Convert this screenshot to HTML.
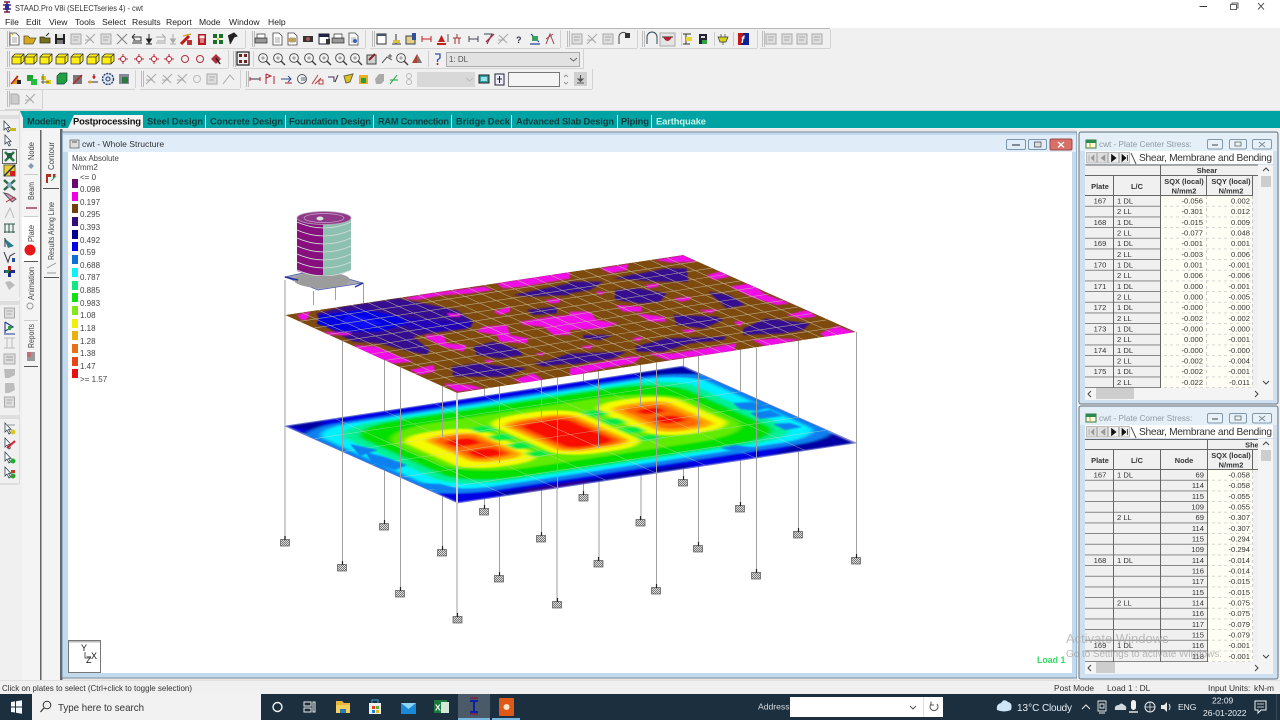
<!DOCTYPE html>
<html lang="en"><head><meta charset="utf-8"><title>STAAD.Pro V8i</title>
<style>
html,body{margin:0;padding:0;width:1280px;height:720px;overflow:hidden;background:#f0f0f0}
svg{display:block;position:absolute;left:0;top:0;filter:blur(.3px)}
text{font-family:"Liberation Sans",sans-serif;font-size:8.5px;fill:#333}
.m{font-size:8.6px;fill:#222}
.tb{font-weight:bold;font-size:9.4px;fill:#123c3c}
.t{font-size:7.6px;fill:#333}
.e{text-anchor:end}
.c{text-anchor:middle}
.h{font-size:7.4px;font-weight:bold;fill:#333;text-anchor:middle}
.l{font-size:8px;fill:#444}
.v{font-size:8.6px;fill:#444}
.w{fill:#e8eef2;font-size:9.5px}
</style></head><body>
<svg width="1280" height="720" viewBox="0 0 1280 720" xmlns="http://www.w3.org/2000/svg">
<defs>
<pattern id="rl" width="60" height="10.667" patternUnits="userSpaceOnUse" y="196"><rect width="60" height="1" y="9.9" fill="#666"/></pattern>
<pattern id="rd" width="6" height="10.667" patternUnits="userSpaceOnUse" y="196"><rect width="3" height="1" y="9.9" fill="#ccc"/></pattern>
<pattern id="rl2" width="60" height="10.667" patternUnits="userSpaceOnUse" y="470"><rect width="60" height="1" y="9.9" fill="#666"/></pattern>
<pattern id="rd2" width="6" height="10.667" patternUnits="userSpaceOnUse" y="470"><rect width="3" height="1" y="9.9" fill="#ccc"/></pattern>
<pattern id="hatch" width="2" height="2" patternUnits="userSpaceOnUse"><rect width="2" height="2" fill="#ddd"/><rect width="1" height="1" fill="#777"/><rect x="1" y="1" width="1" height="1" fill="#777"/></pattern>
<clipPath id="pl"><rect width="100" height="100"/></clipPath>
<clipPath id="top"><polygon points="285,315 683,255 856,332 457,393"/></clipPath>
<clipPath id="cyl"><rect x="297" y="214" width="54" height="62"/></clipPath>
<filter id="b" x="-5%" y="-5%" width="110%" height="110%"><feGaussianBlur stdDeviation=".55 .7"/></filter>
<filter id="b2" x="-5%" y="-5%" width="110%" height="110%"><feGaussianBlur stdDeviation=".6 .9"/></filter>
<g id="cube"><path d="M-6 -2 L-3 -5 H6 V2 L3 5 H-6Z" fill="#ffee10" stroke="#333" stroke-width=".8"/><path d="M-6 -2 H3 V5 M3 -2 L6 -5" fill="none" stroke="#333" stroke-width=".8"/></g>
<g id="ra"><path d="M-5 0H5M0 -5V5" stroke="#c02030" stroke-width="1"/><circle r="2.5" fill="#fff" stroke="#c02030"/></g>
<g id="mag"><circle cx="-1" cy="-1" r="4.4" fill="#f4f4f4" stroke="#555"/><path d="M2 2L6 6" stroke="#444" stroke-width="1.5"/><path d="M-3 -1H1M-1 -3V1" stroke="#777" stroke-width=".7"/></g>
<g id="dis"><path d="M-5 -5H5V5H-5Z" fill="#ddd" stroke="#aaa"/><path d="M-3 -2H3M-3 1H2" stroke="#aaa"/></g>
<g id="dis2"><path d="M-5 5L5 -5M-4 -4L4 4M-5 1H2" fill="none" stroke="#aaa" stroke-width="1.1"/></g>
<g id="pg"><path d="M-4 -6H2L5 -3V6H-4Z" fill="#fff" stroke="#444" stroke-width=".8"/><path d="M-2 -1H3M-2 1H3M-2 3H3" stroke="#888" stroke-width=".7"/></g>
<g id="pr"><path d="M-6 -1H6V4H-6Z" fill="#999" stroke="#333" stroke-width=".7"/><path d="M-4 -5H4V-1H-4Z" fill="#fff" stroke="#333" stroke-width=".7"/></g>
<g id="lft"><path d="M-4 -6L-4 3L-2 1L0 5L1.5 4L-.5 0.5L2 .5Z" fill="#fff" stroke="#345" stroke-width=".8"/></g>
</defs>

<!-- chrome -->
<rect width="1280" height="720" fill="#f0f0f0"/>
<rect width="1280" height="28" fill="#fff"/>
<path d="M4 2H10M7 2V12M4 12H10M3 5H11M3 9H11" stroke="#702050" stroke-width="1.6"/>
<path d="M5 4H9V10H5Z" fill="#2030a0"/>
<text x="15" y="11" style="font-size:8.2px" textLength="128" lengthAdjust="spacingAndGlyphs">STAAD.Pro V8i (SELECTseries 4) - cwt</text>
<text class="m" x="5" y="25">File</text><text class="m" x="26" y="25">Edit</text><text class="m" x="49" y="25">View</text><text class="m" x="75" y="25">Tools</text><text class="m" x="102" y="25">Select</text><text class="m" x="132" y="25">Results</text><text class="m" x="166" y="25">Report</text><text class="m" x="199" y="25">Mode</text><text class="m" x="229" y="25">Window</text><text class="m" x="268" y="25">Help</text>
<path d="M1199.500 6.500H1207" stroke="#333"/>
<path d="M1230.500 4.500H1236.500V9.500H1230.500ZM1232 4V3H1238V8H1237" fill="none" stroke="#333" stroke-width=".8"/>
<path d="M1258 3L1264 9.500M1264 3L1258 9.500" stroke="#333" stroke-width=".9"/>

<!-- toolbars -->
<rect y="28" width="830" height="1" fill="#b8b8b8"/>
<g fill="none" stroke="#d2d2d2">
<path d="M5 48.500H245M250 48.500H365M370 48.500H560M565 48.500H637M640 48.500H757M760 48.500H830"/>
<path d="M5 68.500H228M233 68.500H583M583.500 49V69"/>
<path d="M5 89.500H135M140 89.500H240M245 89.500H592M592.500 69V89"/>
<path d="M5 109.500H42M42.500 90V109"/>
<path d="M245.500 30V48M365.500 30V48M560.500 30V48M637.500 30V48M757.500 30V48M830.500 30V48M228.500 50V68M135.500 70V88M240.500 70V88M253.500 51V67"/>
</g>
<g fill="none" stroke="#bcbcbc">
<path d="M7.500 31V47M9.500 31V47M252.500 31V47M254.500 31V47M372.500 31V47M374.500 31V47M567.500 31V47M569.500 31V47M642.500 31V47M644.500 31V47M762.500 31V47M764.500 31V47"/>
<path d="M7.500 51V67M9.500 51V67M233.500 51V67M235.500 51V67M7.500 71V87M9.500 71V87M141.500 71V87M143.500 71V87M246.500 71V87M248.500 71V87M7.500 91V107M9.500 91V107"/>
</g>
<!-- row 1 -->
<use href="#pg" x="14" y="39"/><path d="M11 33L13 35M9 36H11" stroke="#c90"/>
<path d="M24 43V36H28L30 38H34L36 38L33 44H24Z" fill="#d8a820" stroke="#553" stroke-width=".8"/>
<path d="M40 43V37H44L45 38H50V43Z" fill="#76701c" stroke="#332" stroke-width=".8"/><path d="M46 36L49 33" stroke="#222"/>
<path d="M55 34H65V44H55Z" fill="#222"/><path d="M57 34H63V38H57Z" fill="#ddd"/><path d="M57 40H63V44H57Z" fill="#777"/>
<use href="#dis" x="76" y="39"/><use href="#dis2" x="90" y="39"/><use href="#dis" x="106" y="39"/><path d="M117 34L127 44M127 34L117 44" stroke="#888" stroke-width="1.2"/>
<path d="M132 37H141V41H133M132 37L135 34M132 37L135 40M132 43H142" fill="none" stroke="#333" stroke-width="1"/>
<path d="M149 34V41M146.500 39L149 43L151.500 39ZM146 44H152" fill="#222" stroke="#222"/>
<path d="M156 37H165V41H157M165 37L162 34M156 43H166" fill="none" stroke="#aaa"/>
<path d="M173 34V41M170.500 39L173 43L175.500 39ZM170 44H176" fill="#aaa" stroke="#aaa"/>
<path d="M181 44L189 36" stroke="#c01818" stroke-width="3"/><path d="M183 36L191 34" stroke="#d0a020" stroke-width="1.4"/><path d="M187 40H192V45H187Z" fill="#c03030"/>
<path d="M198 34H206V45H198Z" fill="#b81820"/><path d="M200 36H204V38H200ZM200 40H204M200 42H204" fill="#eee" stroke="#eee"/>
<path d="M213 34H217V38H213ZM219 34H223V38H219ZM213 40H217V44H213ZM219 40H223V44H219Z" fill="#187028"/><path d="M217 38H219V40H217Z" fill="#d0e010"/>
<path d="M228 36L234 33L237 36L234 37L230 44" fill="#222" stroke="#222"/>
<use href="#pr" x="261" y="39"/><use href="#pg" x="277" y="39"/><use href="#pg" x="292" y="39"/><path d="M288 42H296V38H288Z" fill="#bba060"/>
<path d="M303 36H313V42H303Z" fill="#333"/><circle cx="308" cy="39" r="2" fill="#a55"/>
<path d="M319 34H329V44H319Z" fill="#fff" stroke="#223"/><path d="M319 34H329V37H319Z" fill="#224"/><path d="M326 39H330V44H326Z" fill="#333"/>
<use href="#pr" x="338" y="39"/><use href="#pg" x="353" y="39"/><circle cx="355" cy="41" r="2" fill="#3060c0"/>
<path d="M377 34H386V44H377Z" fill="#fff" stroke="#333"/><path d="M377 34H386V36H377Z" fill="#456"/>
<path d="M392 44H401M396 44V34" stroke="#333"/><path d="M393 40H400V43H393Z" fill="#d8c040"/>
<path d="M406 36H415V44H406Z" fill="#e8d080" stroke="#345"/><path d="M412 33H416V40H412Z" fill="#3050a0"/>
<path d="M422 39H431M422 36V42M431 36V42" stroke="#c02020"/>
<path d="M437 44H446" stroke="#c02020" stroke-width="2"/><path d="M441.500 35L438 42H445Z" fill="#c02020"/><path d="M448 34V42" stroke="#555"/>
<path d="M453 38H461M455 38V44M459 38V44M457 38V34" fill="none" stroke="#a03030"/>
<path d="M469 39H478M469 36V42M478 36V42" stroke="#445"/>
<path d="M484 34H492L487 44" fill="none" stroke="#345"/><path d="M486 42L494 34" stroke="#c02040" stroke-width="1.3"/>
<use href="#dis2" x="503" y="39"/><text x="516" y="43" style="font-size:9px;font-weight:bold;fill:#334">?</text>
<path d="M530 44H540M531 34L539 42" stroke="#2040a0" stroke-width="1.2"/><path d="M532 36H538V41H532Z" fill="#40a060"/>
<path d="M546 44L550 34L554 44M553 34L546 39" fill="none" stroke="#a04050"/>
<use href="#dis" x="577" y="39"/><use href="#dis2" x="592" y="39"/><use href="#dis" x="608" y="39"/>
<path d="M619 44V38M619 38A4 4 0 0 1 628 36" fill="none" stroke="#444"/><path d="M625 33H630V38H625Z" fill="#333"/>
<path d="M647 44V37A5 5 0 0 1 657 37V44" fill="none" stroke="#345"/>
<rect x="660" y="33" width="15" height="13" fill="#e4e4e4" stroke="#aaa"/><path d="M662 37H673" stroke="#333"/><path d="M663 37Q667.500 45 672 37Z" fill="#b02030"/>
<rect x="681" y="32" width="1" height="14" fill="#ccc"/><path d="M683 34H691M686 34V44M683 44H690" stroke="#333"/><path d="M686 37H692V41H686Z" fill="#e8d830"/>
<path d="M699 34H707V44H699Z" fill="#223"/><path d="M701 36H705V38H701Z" fill="#ddd"/><path d="M702 40H707V44H702Z" fill="#30a040"/>
<rect x="714" y="32" width="1" height="14" fill="#ccc"/><path d="M718 37H728L726 42H720ZM721 34V37M725 34V37M723 42V45" fill="#d8d020" stroke="#333" stroke-width=".7"/>
<rect x="733" y="32" width="1" height="14" fill="#ccc"/><rect x="738" y="33" width="11" height="12" fill="#c01818"/><path d="M743 33H749V45H741Z" fill="#102090"/><text x="741" y="43" style="font-size:10px;font-weight:bold;font-style:italic;fill:#fff">f</text>
<use href="#dis" x="771" y="39"/><use href="#dis" x="787" y="39"/><use href="#dis" x="802" y="39"/><use href="#dis" x="817" y="39"/>
<!-- row 2 -->
<use href="#cube" x="18" y="59"/><use href="#cube" x="31" y="59"/><use href="#cube" x="46" y="59"/><use href="#cube" x="62" y="59"/><use href="#cube" x="77" y="59"/><use href="#cube" x="93" y="59"/><use href="#cube" x="108" y="59"/>
<use href="#ra" x="123" y="59"/><use href="#ra" x="139" y="59"/><use href="#ra" x="154" y="59"/><use href="#ra" x="169" y="59"/>
<circle cx="185" cy="59" r="3.500" fill="none" stroke="#b03040"/><circle cx="200" cy="59" r="3.500" fill="none" stroke="#b03040"/>
<path d="M211 59L216 54L221 59L216 64Z" fill="#b03040"/><path d="M216 58L220 64" stroke="#222" stroke-width="1.500"/>
<rect x="237" y="52" width="12" height="13" fill="#eee" stroke="#222" stroke-width="1.200"/><path d="M239 54H242V57H239ZM244 54H247V57H244ZM239 60H242V63H239ZM244 60H247V63H244Z" fill="#702020"/>
<use href="#mag" x="264" y="59"/><use href="#mag" x="279" y="59"/><use href="#mag" x="295" y="59"/><use href="#mag" x="310" y="59"/><use href="#mag" x="325" y="59"/><use href="#mag" x="341" y="59"/><use href="#mag" x="356" y="59"/>
<path d="M367 55H376V64H367Z" fill="#d0d0d0" stroke="#444"/><path d="M369 60L375 54" stroke="#8a2020" stroke-width="2"/>
<path d="M382 63L387 57L392 60M390 54V59M388 56H392" fill="none" stroke="#555"/>
<use href="#mag" x="402" y="59"/>
<path d="M412 63L417 54L422 63Z" fill="#b04030"/><path d="M417 54V63H422Z" fill="#777"/>
<rect x="428" y="51" width="1" height="16" fill="#ccc"/>
<path d="M435 54H440V58L437.500 60V62" fill="none" stroke="#3050a0" stroke-width="1.300"/><circle cx="437.500" cy="64" r="1" fill="#a02020"/>
<rect x="446.500" y="52.500" width="133" height="14" fill="#e2e2e2" stroke="#aaa"/><text x="449" y="62" style="font-size:8px;fill:#555">1: DL</text><path d="M570 58L573.500 61L577 58" fill="none" stroke="#666"/>
<!-- row 3 -->
<path d="M11 84L17 75L20 84Z" fill="#d8a020"/><path d="M11 84L18 76" stroke="#c02020" stroke-width="1.500"/><path d="M17 80H21V84H17Z" fill="#223"/>
<path d="M27 75H33V81H27Z" fill="#20a030"/><path d="M31 79H37V85H31Z" fill="#20c040"/>
<path d="M41 76H46V80H41ZM46 80H51V84H46Z" fill="#e0d010"/><path d="M43 74V84M41 82H49" stroke="#333" stroke-width=".7"/>
<path d="M57 76L60 73H67V81L64 84H57Z" fill="#20a040" stroke="#143" stroke-width=".7"/>
<path d="M73 75H82V84H73Z" fill="#777"/><path d="M73 84L82 75" stroke="#c02020" stroke-width="1.500"/>
<path d="M88 82H98M94 74V79" stroke="#333" stroke-width="1"/><circle cx="90" cy="82" r="1.500" fill="#e0a020"/><circle cx="94" cy="77" r="1.500" fill="#d02020"/>
<circle cx="108" cy="79" r="5.500" fill="#dfe6f0" stroke="#223a6a" stroke-width="1.400" stroke-dasharray="2 1"/><circle cx="108" cy="79" r="2" fill="none" stroke="#223a6a"/>
<path d="M119 74H129V84H119Z" fill="#889"/><path d="M122 77H128V83H122Z" fill="#2a7a40"/>
<use href="#dis2" x="151" y="79"/><use href="#dis2" x="167" y="79"/><use href="#dis2" x="182" y="79"/><circle cx="197" cy="79" r="3.500" fill="none" stroke="#bbb"/><use href="#dis" x="212" y="79"/><path d="M223 84L230 75L234 80" fill="none" stroke="#aaa"/>
<path d="M250 79H260" stroke="#334"/><path d="M250 77V81M260 77V81" stroke="#c02020"/>
<path d="M266 74V84M266 74L271 76L266 78M274 76V84" fill="none" stroke="#b02030"/>
<path d="M281 79H291M288 76L291 79L288 82" fill="none" stroke="#304a90"/><path d="M285 83H292" stroke="#a02020"/>
<circle cx="302" cy="79" r="4.500" fill="none" stroke="#556"/><path d="M301 77H306V81H301Z" fill="#a0b0b0"/>
<path d="M312 84L318 75M315 84L321 78M319 80H323V84H319Z" fill="none" stroke="#b04040"/>
<path d="M328 77H334V82M335 82L338 75" fill="none" stroke="#435"/>
<path d="M344 76L353 74L350 82L346 83Z" fill="#e0c020" stroke="#664"/>
<path d="M359 75H368V84H359Z" fill="#e8b020"/><path d="M361 78H366V83H361Z" fill="#20a040"/>
<path d="M375 79L379 74H384V81L381 84H376Z" fill="#aaa"/>
<path d="M390 84L397 75M390 80H398" stroke="#20a040" fill="none"/>
<circle cx="409" cy="76" r="2.500" fill="none" stroke="#bbb"/><circle cx="409" cy="82" r="2.500" fill="none" stroke="#bbb"/>
<rect x="417" y="72" width="58" height="15" fill="#d8d8d8"/><path d="M466 78L469.500 81L473 78" fill="none" stroke="#bbb"/>
<rect x="479" y="75" width="10" height="8" fill="#30a0a8" stroke="#222"/><rect x="481" y="77" width="6" height="4" fill="#a0e0e8"/>
<rect x="495" y="74" width="9" height="11" fill="#eef" stroke="#223"/><path d="M499.500 76V83M497 79H502" stroke="#223"/>
<rect x="508.500" y="72.500" width="51" height="14" fill="#f4f4f4" stroke="#777"/>
<path d="M564 77L566 75L568 77M564 82L566 84L568 82" fill="none" stroke="#999"/>
<rect x="574" y="72" width="13" height="14" fill="#cfcfcf"/><path d="M580.500 75V81M578 79L580.500 81.500L583 79ZM577 83H584" stroke="#555" fill="#555"/>
<!-- row 4 -->
<path d="M11 94H17L19 96V104H11Z" fill="#ccc" stroke="#aaa"/><use href="#dis2" x="30" y="99"/>

<!-- teal -->
<rect y="110" width="1280" height="1" fill="#d8d8d8"/>
<path d="M20 111H1280V128H20Z" fill="#00a3a3"/>
<path d="M20 111V128H23V118Z" fill="#f0f0f0"/>
<path d="M68 128L74 115H143V128Z" fill="#f3f3f3"/>
<path d="M205.500 115V128M285.500 115V128M373.500 115V128M451.500 115V128M511.500 115V128M617.500 115V128M651.500 115V128" stroke="#d8f0f0"/>
<text class="tb" x="27" y="124.500" style="font-size:9.300px" textLength="39">Modeling</text>
<text class="tb" x="73" y="124.500" style="fill:#111" textLength="68">Postprocessing</text>
<text class="tb" x="147" y="124.500" textLength="56">Steel Design</text>
<text class="tb" x="210" y="124.500" textLength="73">Concrete Design</text>
<text class="tb" x="289" y="124.500" textLength="82">Foundation Design</text>
<text class="tb" x="378" y="124.500" textLength="71">RAM Connection</text>
<text class="tb" x="456" y="124.500" textLength="54">Bridge Deck</text>
<text class="tb" x="516" y="124.500" textLength="98">Advanced Slab Design</text>
<text class="tb" x="621" y="124.500" textLength="28">Piping</text>
<text class="tb" x="656" y="124.500" style="fill:#c8f4e8" textLength="50">Earthquake</text>

<!-- left toolbar -->
<path d="M0 116H19M0 118H19" stroke="#ccc"/><rect x="19" y="112" width="1" height="185" fill="#ddd"/>
<use href="#lft" x="8" y="127"/><path d="M10 128H16V131H10Z" fill="#c8b820"/>
<use href="#lft" x="9" y="141"/>
<rect x="2.500" y="149.500" width="14" height="14" fill="#eef" stroke="#666"/><path d="M5 152L14 161M14 152L5 161" stroke="#20803a" stroke-width="2.500"/><path d="M7 153H12V158H7Z" fill="#2a5a3a"/>
<path d="M4 165H15V176H4Z" fill="#e8d030" stroke="#664"/><path d="M4 176L15 165" stroke="#203040" stroke-width="1.500"/><path d="M10 171H15V176H10Z" fill="#d02020"/>
<path d="M4 180L15 190M15 180L4 190" stroke="#2a6a4a" stroke-width="2.500"/><circle cx="9.500" cy="185" r="2.500" fill="#8ac"/>
<path d="M4 193L12 202L16 199L8 194Z" fill="#d0a0c0" stroke="#555"/><path d="M6 202L15 197" stroke="#c02030"/>
<path d="M5 218L10 208L14 218" fill="none" stroke="#bbb"/>
<path d="M4 224H15M5 224V233M9 224V233M13 224V233M4 232H15" stroke="#2a5a4a"/>
<path d="M4 238L14 246L8 248Z" fill="#2a7a90"/><path d="M5 238V247" stroke="#333"/>
<path d="M4 252L8 262L10 256L15 253" fill="none" stroke="#334"/><path d="M12 258H15V262H12Z" fill="#2050a0"/>
<path d="M9.500 266V277M4 271.500H15" stroke="#1a2a90" stroke-width="3"/><path d="M9.500 266V271" stroke="#c02020" stroke-width="3"/><path d="M5 271.500H9" stroke="#208030" stroke-width="3"/>
<path d="M5 282L9 290L15 285L10 281Z" fill="#bbb"/>
<path d="M0 302H19M0 304H19" stroke="#ccc"/><rect x="19" y="300" width="1" height="112" fill="#ddd"/>
<use href="#dis" x="9.500" y="313"/>
<path d="M5 322V333M5 322L13 327L5 331M4 334H15" fill="none" stroke="#223a90" stroke-width="1.100"/><path d="M8 326H11V330H8Z" fill="#30a040"/>
<path d="M4 338H15M4 348H15M7 338V348M12 338V348" stroke="#bbb"/>
<path d="M4 354H15V364H4Z" fill="#ddd" stroke="#aaa"/><path d="M6 357H13M6 360H13" stroke="#999"/>
<path d="M4 369H15V375L9 378H5Z" fill="#bbb"/><path d="M5 383H14L15 390L9 393H5Z" fill="#bdbdbd"/><use href="#dis" x="9.500" y="402"/>
<path d="M0 416H19M0 418H19" stroke="#ccc"/><rect x="19" y="414" width="1" height="70" fill="#ddd"/>
<use href="#lft" x="9" y="429"/><circle cx="13" cy="432" r="2.500" fill="#d8c820"/><path d="M6 425H15" stroke="#999"/>
<use href="#lft" x="9" y="444"/><path d="M7 448L15 441" stroke="#d02030" stroke-width="2"/>
<use href="#lft" x="9" y="458"/><circle cx="13" cy="461" r="2.500" fill="#20b030"/>
<use href="#lft" x="9" y="473"/><circle cx="13" cy="476" r="2.500" fill="#30a030"/><path d="M11 470H15V473H11Z" fill="#c04020"/>
<path d="M0 484H19" stroke="#ccc"/>

<!-- vertical tab strips -->
<rect x="22" y="131" width="18" height="549" fill="#f4f4f4"/>
<rect x="42" y="129" width="18" height="551" fill="#f4f4f4"/>
<rect x="40" y="130" width="1.500" height="550" fill="#666"/>
<path d="M24 174.500H38M24 216.500H38M24 320.500H38" stroke="#ccc"/>
<rect x="22" y="217" width="18" height="44" fill="#fff"/>
<path d="M24 366.500H38M24 261.500H38" stroke="#555"/><path d="M43 188.500H59M44 277.500H59" stroke="#555"/>
<text class="v" transform="translate(34,160) rotate(-90)" textLength="18" lengthAdjust="spacingAndGlyphs">Node</text>
<path d="M31 163L34 166L31 169L28 166Z" fill="#8898b8"/>
<text class="v" transform="translate(34,200) rotate(-90)" textLength="18" lengthAdjust="spacingAndGlyphs">Beam</text><path d="M26 208H37" stroke="#a04060" stroke-width="1.500"/>
<text class="v" transform="translate(34,242) rotate(-90)" textLength="17" lengthAdjust="spacingAndGlyphs">Plate</text><circle cx="30" cy="250" r="5.500" fill="#e81818"/>
<text class="v" transform="translate(34,300) rotate(-90)" textLength="33" lengthAdjust="spacingAndGlyphs">Animation</text><circle cx="30" cy="306" r="3" fill="none" stroke="#999"/>
<text class="v" transform="translate(34,348) rotate(-90)" textLength="24" lengthAdjust="spacingAndGlyphs">Reports</text><rect x="27" y="352" width="8" height="9" fill="#999"/><path d="M27 352H31V357H27Z" fill="#c07070"/>
<text class="v" transform="translate(54,170) rotate(-90)" textLength="28" lengthAdjust="spacingAndGlyphs">Contour</text>
<path d="M46 174H51V177H48V183H46ZM53 174H56L53 180Z" fill="#b03020"/><path d="M51 181L56 176" stroke="#30b060"/>
<text class="v" transform="translate(54,260) rotate(-90)" textLength="58" lengthAdjust="spacingAndGlyphs">Results Along Line</text>
<path d="M47 268L56 263M47 273H56" fill="none" stroke="#999"/>

<!-- MDI -->
<rect x="60" y="129" width="1020" height="551" fill="#e8e8e8"/>
<rect x="60" y="129" width="2.500" height="551" fill="#5c6770"/>
<rect x="62" y="132" width="1015" height="546" fill="#c2daee" stroke="#66788a" stroke-width=".8"/>
<rect x="63" y="135" width="1013" height="17" fill="#e0edf8"/>
<rect x="68" y="152" width="1004" height="521" fill="#fff"/>
<rect x="70" y="140" width="9" height="8" fill="#ddd" stroke="#555" stroke-width=".7"/><path d="M72 142H77" stroke="#555"/>
<text x="82" y="147" style="font-size:8.6px;fill:#333">cwt - Whole Structure</text>
<g fill="none" stroke="#7d95a8"><rect x="1006.500" y="139.500" width="19" height="10" rx="1.500"/><rect x="1028.500" y="139.500" width="18" height="10" rx="1.500"/></g>
<rect x="1050" y="139" width="22" height="11" rx="1.500" fill="#d87068" stroke="#9a4a48"/>
<path d="M1012 145H1020" stroke="#445" stroke-width="1.200"/><path d="M1034.500 142H1041V147H1034.500Z" fill="#ddd" stroke="#445" stroke-width=".7"/><path d="M1058 142L1064 147.500M1064 142L1058 147.500" stroke="#fff" stroke-width="1.300"/>

<!-- legend -->
<text class="l" x="72" y="161" style="font-size:7.800px">Max Absolute</text><text class="l" x="72" y="170">N/mm2</text>
<g>
<rect x="72" y="179" width="6" height="9" fill="#6a0a70"/><rect x="72" y="192" width="6" height="9" fill="#f000e0"/><rect x="72" y="204" width="6" height="9" fill="#70400c"/><rect x="72" y="217" width="6" height="9" fill="#30107a"/><rect x="72" y="230" width="6" height="9" fill="#000090"/><rect x="72" y="242" width="6" height="9" fill="#0000e8"/><rect x="72" y="255" width="6" height="9" fill="#1070d8"/><rect x="72" y="268" width="6" height="9" fill="#10f0f8"/><rect x="72" y="281" width="6" height="9" fill="#10e880"/><rect x="72" y="293" width="6" height="9" fill="#10e010"/><rect x="72" y="306" width="6" height="9" fill="#80e818"/><rect x="72" y="319" width="6" height="9" fill="#f0f010"/><rect x="72" y="331" width="6" height="9" fill="#e8b010"/><rect x="72" y="344" width="6" height="9" fill="#e87018"/><rect x="72" y="357" width="6" height="9" fill="#e84818"/><rect x="72" y="369" width="6" height="9" fill="#e81010"/>
</g>
<text class="l" x="80" y="180">&lt;= 0</text><text class="l" x="80" y="192">0.098</text><text class="l" x="80" y="205">0.197</text><text class="l" x="80" y="217">0.295</text><text class="l" x="80" y="230">0.393</text><text class="l" x="80" y="243">0.492</text><text class="l" x="80" y="255">0.59</text><text class="l" x="80" y="268">0.688</text><text class="l" x="80" y="280">0.787</text><text class="l" x="80" y="293">0.885</text><text class="l" x="80" y="306">0.983</text><text class="l" x="80" y="318">1.08</text><text class="l" x="80" y="331">1.18</text><text class="l" x="80" y="344">1.28</text><text class="l" x="80" y="356">1.38</text><text class="l" x="80" y="369">1.47</text><text class="l" x="80" y="382">&gt;= 1.57</text>

<!-- lower column segments -->
<g stroke="#a0a0a0" stroke-width="1" fill="none">
<path d="M342.500 452V567M400.500 478V593M384.500 411V526M442.500 437V552M499.500 463V578M484.500 396V511M541.500 422V538M656.500 474V590M583.500 381V497M698.500 433V548M756.500 459V575M683.500 366V482M740.500 392V508M798.500 418V534M856.500 443V560"/>
</g>
<g stroke="#cfcfcf" stroke-width="2" fill="none"><path d="M285 426V542M457 503V619M557 489V604M599 448V563M641 407V522"/></g>
<!-- supports -->
<g stroke="#555" stroke-width=".7" fill="url(#hatch)">
<rect x="280.500" y="539.500" width="9" height="6.500"/><rect x="337.500" y="564.500" width="9" height="6.500"/><rect x="395.500" y="590.500" width="9" height="6.500"/><rect x="453" y="616.500" width="9" height="6.500"/><rect x="379.500" y="523.500" width="9" height="6.500"/><rect x="437.500" y="549.500" width="9" height="6.500"/><rect x="494.500" y="575.500" width="9" height="6.500"/><rect x="552.500" y="601.500" width="9" height="6.500"/><rect x="479.500" y="508.500" width="9" height="6.500"/><rect x="536.500" y="535.500" width="9" height="6.500"/><rect x="594" y="560.500" width="9" height="6.500"/><rect x="651.500" y="587.500" width="9" height="6.500"/><rect x="579" y="494.500" width="9" height="6.500"/><rect x="636" y="519.500" width="9" height="6.500"/><rect x="693.500" y="545.500" width="9" height="6.500"/><rect x="751.500" y="572.500" width="9" height="6.500"/><rect x="678.500" y="479.500" width="9" height="6.500"/><rect x="735.500" y="505.500" width="9" height="6.500"/><rect x="793.500" y="531.500" width="9" height="6.500"/><rect x="851.500" y="557.500" width="9" height="6.500"/>
</g>
<g stroke="#222" stroke-width="1.200"><path d="M285 536V540M342.500 561V565M400.500 587V591M457.500 613V617M384.500 520V524M442.500 546V550M499.500 572V576M557.500 598V602M484.500 505V509M541.500 532V536M598.500 557V561M656.500 584V588M583.500 491V495M640.500 516V520M698.500 542V546M756.500 569V573M683.500 476V480M740.500 502V506M798.500 528V532M856.500 554V558"/></g>

<!-- bottom plate -->
<g transform="matrix(3.98,-.6,1.72,.77,285,426)" clip-path="url(#pl)">
<g filter="url(#b2)">
<rect width="100" height="100" fill="#0000e4"/>
<path d="M0 0H10L5 8H0Z M0 0V18L5 20L3 8Z" fill="#0000a0"/>
<path d="M10 96H60L58 100H12Z" fill="#0000a4"/><path d="M18 97H34V100H18Z" fill="#2a0090"/>
<path d="M86 0H100V12L92 6Z" fill="#0000a8"/><path d="M96 86L100 80V100H78L84 96Z" fill="#0000a4"/>
<rect x="-2" y="5" width="104" height="88" rx="14" fill="#0f80f0"/>
<rect x="2" y="7" width="96" height="82" rx="12" fill="#00f0ff"/>
<rect x="6" y="9" width="88" height="77" rx="13" fill="#00f098"/>
<rect x="9" y="11" width="82" height="73" rx="14" fill="#00e000"/>
<rect x="13" y="19" width="74" height="57" rx="16" fill="#60ec00"/>
<rect x="15.500" y="27" width="20" height="44" rx="9" fill="#f4fa00"/>
<rect x="39" y="23" width="22" height="49" rx="9" fill="#f4fa00"/>
<rect x="65" y="24" width="20" height="43" rx="9" fill="#f4fa00"/>
<rect x="20" y="32" width="13" height="33" rx="5" fill="#ffa800"/>
<rect x="41" y="28" width="18" height="40" rx="6" fill="#ffa800"/>
<rect x="68" y="29" width="14" height="34" rx="5" fill="#ffa800"/>
<rect x="21.500" y="34" width="10" height="28" rx="4" fill="#ff6800"/>
<rect x="42.500" y="30" width="15" height="36" rx="5" fill="#ff6000"/>
<rect x="70" y="32" width="10" height="28" rx="4" fill="#ff6800"/>
<rect x="23" y="38" width="7" height="8" rx="2.500" fill="#f81000"/><rect x="23" y="51" width="7" height="9" rx="2.500" fill="#f81000"/>
<rect x="44" y="33" width="12" height="31" rx="4" fill="#f80800"/>
<rect x="72" y="36" width="6" height="6" rx="2" fill="#f81000"/><rect x="72" y="46" width="6" height="8" rx="2" fill="#f81000"/>
<g fill="#00ec40"><rect x="33.500" y="29" width="5" height="6.500" rx="1"/><rect x="33.500" y="39.500" width="5" height="6.500" rx="1"/><rect x="33.500" y="50.500" width="5" height="6.500" rx="1"/><rect x="33.500" y="61" width="5" height="5.500" rx="1"/><rect x="61" y="30" width="5" height="6.500" rx="1"/><rect x="61" y="40.500" width="5" height="6.500" rx="1"/><rect x="61" y="51.500" width="5" height="6.500" rx="1"/><rect x="61" y="62" width="5" height="5.500" rx="1"/></g>
</g>
<path vector-effect="non-scaling-stroke" fill="none" stroke="#d8dcc8" stroke-opacity=".55" stroke-width=".6" d="M0 16.700H100M0 33.300H100M0 50H100M0 66.700H100M0 83.300H100M12.500 0V100M25 0V100M37.500 0V100M50 0V100M62.500 0V100M75 0V100M87.500 0V100"/>
</g>
<!-- blue notches on bottom plate -->
<g fill="#0f80f0" filter="url(#b)">
<polygon points="733,403 752,402 771,407 757,411 740,409"/><polygon points="750,413 770,410 783,416 760,419"/><polygon points="720,448 735,445 755,448 741,453"/><polygon points="773,424 790,423 802,427 785,430"/>
<polygon points="365,452 385,457 407,465 395,470 372,463"/><polygon points="350,444 378,450 360,456"/>
<polygon points="418,483 440,484 465,490 440,492"/>
</g>
<polygon points="285,426 683,366 856,443 458,503" fill="none" stroke="#6878d0" stroke-width=".7"/>

<!-- upper column segments -->
<g stroke="#a0a0a0" stroke-width="1" fill="none">
<path d="M342.500 341V452M400.500 367V478M384.500 300V411M442.500 326V437M499.500 352V463M557.500 378V489M484.500 285V396M541.500 311V422M598.500 337V448M656.500 363V474M583.500 270V381M640.500 296V407M698.500 322V433M756.500 348V459M683.500 255V366M740.500 281V392M798.500 307V418M856.500 332V443"/>
<path d="M313.500 291V305M335.500 287V300M363.500 283V303"/>
</g>
<g stroke="#cfcfcf" stroke-width="2" fill="none"><path d="M285 280V426M457 393V503"/></g>

<!-- top plate -->
<g clip-path="url(#top)">
<polygon points="285,315 683,255 856,332 457,393" fill="#7e4a0e"/>
<g filter="url(#b)">
<g transform="translate(270,200) scale(.33333)">
<g fill="#360c90">
<polygon points="320,305 385,295 470,312 560,330 610,365 600,385 480,400 430,410 480,450 470,465 400,450 330,430 250,425 210,405 150,370 140,340 220,320"/>
<polygon points="610,440 670,425 740,445 760,465 690,475 620,465"/>
<polygon points="545,500 620,490 770,505 700,530 620,530 550,530"/>
<polygon points="770,330 860,320 860,340 790,345"/>
<polygon points="730,285 800,270 900,250 900,285 780,290"/>
<polygon points="790,490 840,480 900,460 900,490 820,500"/>
</g>
<polygon points="360,345 480,360 610,365 590,385 500,395 420,385" fill="#2206b8"/>
<polygon points="150,345 280,328 370,345 420,370 330,395 220,396 140,372" fill="#0000e0"/>
<polygon points="230,345 285,350 340,370 285,385 210,370" fill="#0808f8"/>
<g fill="#f010e8">
<polygon points="400,295 480,280 640,260 670,270 600,280 520,285 440,300"/>
<polygon points="680,250 900,215 900,235 760,260 700,265"/>
<polygon points="80,345 120,335 110,360 95,360"/>
<polygon points="160,395 250,400 230,405 180,405"/>
<polygon points="250,435 320,440 390,470 430,485 370,490 290,465"/>
<polygon points="465,405 520,405 530,430 590,435 580,455 520,440 470,415"/>
<polygon points="640,380 710,375 720,405 775,415 770,430 690,425 680,405 620,395"/>
<polygon points="750,365 840,350 900,345 900,405 850,405 820,380 760,375"/>
<polygon points="670,335 720,320 720,335 690,345"/>
<polygon points="420,510 490,495 495,515 450,525"/>
<polygon points="520,550 600,555 640,565 560,575"/>
<polygon points="730,540 790,520 820,540 760,550"/>
<polygon points="825,300 870,295 870,308 840,310"/>
<polygon points="530,340 570,342 570,350 540,350"/>
<polygon points="640,480 670,480 660,490"/>
<polygon points="795,460 825,458 815,468"/>
</g>
</g>
<g transform="translate(570,240) scale(.33333)">
<g fill="#360c90">
<polygon points="130,115 210,100 290,85 350,85 355,125 260,125"/>
<polygon points="0,125 100,125 60,150 0,160"/>
<polygon points="135,150 205,145 290,160 270,185 210,190 135,180"/>
<polygon points="415,155 480,165 525,195 470,205"/>
<polygon points="310,225 440,230 460,240 400,265 320,255"/>
<polygon points="520,265 590,235 720,250 700,270 640,280 520,285"/>
<polygon points="40,285 130,285 90,300 40,295"/>
<polygon points="195,320 290,295 470,290 460,300 360,310 280,335 200,335"/>
<polygon points="0,340 170,335 130,355 0,375"/>
</g>
<g fill="#f010e8">
<polygon points="255,60 340,45 380,65 300,68"/>
<polygon points="90,85 175,72 170,90 120,100"/>
<polygon points="410,105 450,95 480,110 430,120"/>
<polygon points="480,140 540,130 590,165 660,190 620,195 540,170"/>
<polygon points="650,225 710,210 740,230 690,235"/>
<polygon points="750,280 800,258 855,277 770,295"/>
<polygon points="545,300 620,295 690,298 590,320"/>
<polygon points="0,215 60,215 80,240 145,250 100,265 0,270"/>
<polygon points="135,195 215,200 215,215 160,215"/>
<polygon points="200,220 280,230 290,245 240,245"/>
<polygon points="310,175 360,170 360,180 330,185"/>
<polygon points="385,210 445,208 420,220"/>
<polygon points="330,270 380,268 360,280"/>
<polygon points="185,295 220,290 205,305"/>
<polygon points="490,245 520,245 510,260"/>
<polygon points="225,135 265,130 265,140 235,145"/>
<polygon points="75,155 110,155 90,165"/>
<polygon points="235,340 310,340 500,310 490,335 290,360"/>
<polygon points="30,320 70,315 60,328"/>
<polygon points="0,385 180,350 215,350 190,370 100,385 20,405 0,405"/>
</g>
</g>
</g>
<g transform="matrix(3.98,-.6,1.72,.78,285,315)">
<path vector-effect="non-scaling-stroke" fill="none" stroke="#c8c4a4" stroke-opacity=".8" stroke-width=".6" d="M0 8.300H100M0 16.700H100M0 25H100M0 33.300H100M0 41.700H100M0 50H100M0 58.300H100M0 66.700H100M0 75H100M0 83.300H100M0 91.700H100M4.170 0V100M8.330 0V100M12.500 0V100M16.670 0V100M20.830 0V100M25 0V100M29.170 0V100M33.330 0V100M37.500 0V100M41.670 0V100M45.830 0V100M50 0V100M54.170 0V100M58.330 0V100M62.500 0V100M66.670 0V100M70.830 0V100M75 0V100M79.170 0V100M83.330 0V100M87.500 0V100M91.670 0V100M95.830 0V100"/>
</g>
</g>

<!-- tank -->
<polygon points="285,277 316,270 363,283 318,290" fill="#a8a8b4" stroke="#4a58b0" stroke-width=".7"/>
<ellipse cx="322" cy="280" rx="28" ry="8" fill="#9c9c9c"/>
<path d="M285 277L298 280M355 287L363 283" stroke="#2030a0" stroke-width="1.500"/>
<path d="M297 217V271Q310 276 323 275V217Z" fill="#88107e"/>
<path d="M323 217H351V270Q340 275 323 275Z" fill="#8cc0b0"/>
<g clip-path="url(#cyl)" fill="none" stroke="#cfdcd4" stroke-width=".8">
<path d="M297 222Q324 234 351 222M297 230Q324 242 351 230M297 238Q324 250 351 238M297 246Q324 258 351 246M297 254Q324 266 351 254M297 262Q324 274 351 262M297 270Q324 282 351 270"/>
</g>
<ellipse cx="324" cy="218" rx="27" ry="6.500" fill="#8e3a88" stroke="#b8a0b8" stroke-width=".8"/>
<ellipse cx="324" cy="218" rx="20" ry="4.500" fill="none" stroke="#d0a8d0" stroke-width=".7"/>
<ellipse cx="320" cy="218.500" rx="3.500" ry="2" fill="#d8e4e0"/>

<!-- triad -->
<rect x="68.500" y="640.500" width="32" height="32" fill="#fff" stroke="#777"/><rect x="69" y="641" width="31" height="1.500" fill="#bbb"/>
<text x="81" y="651" style="font-size:9px;fill:#111">Y</text><text x="86" y="663" style="font-size:9px;fill:#111">Z</text><text x="91" y="659" style="font-size:9px;fill:#111">X</text>
<path d="M85 652V658H91" fill="none" stroke="#333" stroke-width=".8"/>
<text x="1037" y="663" style="font-size:8.800px;font-weight:bold;fill:#30d868">Load 1</text>

<!-- right windows -->
<rect x="1077" y="129" width="203" height="551" fill="#eef0f2"/>
<rect x="1079" y="132" width="199" height="272" rx="2" fill="#cfe1f0" stroke="#66747f"/>
<rect x="1079" y="406" width="199" height="273" rx="2" fill="#cfe1f0" stroke="#66747f"/>
<!-- window 1 title -->
<rect x="1080" y="133" width="197" height="18" fill="#e4eff8"/>
<path d="M1086 140H1096V148H1086Z" fill="#fffbe0" stroke="#3a7a40"/><path d="M1086 140H1096V143H1086Z" fill="#2a8a50"/><path d="M1090 143V148" stroke="#c0a020"/>
<text x="1099" y="147" style="font-size:8.200px;fill:#8d99a4">cwt - Plate Center Stress:</text>
<g fill="#e8f1f8" stroke="#8298a8"><rect x="1207.500" y="139.500" width="15" height="9.500" rx="1.500"/><rect x="1229.500" y="139.500" width="17" height="9.500" rx="1.500"/><rect x="1252.500" y="139.500" width="19" height="9.500" rx="1.500"/></g>
<path d="M1212 145H1218" stroke="#566" stroke-width="1.200"/><path d="M1235 142H1241V146H1235Z" fill="none" stroke="#566" stroke-width=".8"/><path d="M1259 142L1265 147M1265 142L1259 147" stroke="#7a8a96" stroke-width="1"/>
<rect x="1085" y="151" width="188" height="13" fill="#fff"/>
<g fill="#dedede" stroke="#999" stroke-width=".6"><rect x="1086.500" y="152.500" width="10" height="10.500"/><rect x="1097.500" y="152.500" width="10" height="10.500"/><rect x="1108.500" y="152.500" width="10" height="10.500" fill="#eee"/><rect x="1119.500" y="152.500" width="10" height="10.500" fill="#eee"/></g>
<path d="M1089 155V161M1094 155L1091 158L1094 161Z M1105 155L1101 158L1105 161Z" fill="#999" stroke="#999" stroke-width=".6"/>
<path d="M1111.500 154.500L1116 158L1111.500 161.500Z M1122 154.500L1126 158L1122 161.500ZM1127.500 155V161" fill="#111" stroke="#111" stroke-width=".7"/>
<path d="M1131 153L1136 164" stroke="#555"/>
<text x="1139" y="161" style="font-size:10.200px;fill:#333" textLength="133">Shear, Membrane and Bending</text>
<!-- table 1 -->
<rect x="1085" y="165" width="188" height="223" fill="#f0f0f0"/>
<rect x="1160" y="196" width="92" height="192" fill="#fffef4"/>
<rect x="1085" y="196" width="75" height="192" fill="url(#rl)"/>
<rect x="1160" y="196" width="92" height="192" fill="url(#rd)"/>
<g fill="none" stroke="#666"><path d="M1085.500 165H1258M1085 175.500H1258M1085 195.500H1252M1160.500 165V388M1113.500 176V388M1206.500 176V196M1252.500 176V196"/></g>
<path d="M1206.500 196V388M1252.500 196V388" stroke="#ccc" stroke-dasharray="3 3"/>
<text class="h" x="1207" y="173">Shear</text>
<text class="h" x="1100" y="189">Plate</text><text class="h" x="1137" y="189">L/C</text>
<text class="h" x="1184" y="184">SQX (local)</text><text class="h" x="1184" y="193.500">N/mm2</text>
<text class="h" x="1231" y="184">SQY (local)</text><text class="h" x="1231" y="193.500">N/mm2</text>
<g>
<text class="t c" x="1100" y="203.500">167</text><text class="t" x="1117" y="203.500">1 DL</text><text class="t e" x="1203" y="203.500">-0.056</text><text class="t e" x="1250" y="203.500">0.002</text>
<text class="t" x="1117" y="214.200">2 LL</text><text class="t e" x="1203" y="214.200">-0.301</text><text class="t e" x="1250" y="214.200">0.012</text>
<text class="t c" x="1100" y="224.800">168</text><text class="t" x="1117" y="224.800">1 DL</text><text class="t e" x="1203" y="224.800">-0.015</text><text class="t e" x="1250" y="224.800">0.009</text>
<text class="t" x="1117" y="235.500">2 LL</text><text class="t e" x="1203" y="235.500">-0.077</text><text class="t e" x="1250" y="235.500">0.048</text>
<text class="t c" x="1100" y="246.200">169</text><text class="t" x="1117" y="246.200">1 DL</text><text class="t e" x="1203" y="246.200">-0.001</text><text class="t e" x="1250" y="246.200">0.001</text>
<text class="t" x="1117" y="256.800">2 LL</text><text class="t e" x="1203" y="256.800">-0.003</text><text class="t e" x="1250" y="256.800">0.006</text>
<text class="t c" x="1100" y="267.500">170</text><text class="t" x="1117" y="267.500">1 DL</text><text class="t e" x="1203" y="267.500">0.001</text><text class="t e" x="1250" y="267.500">-0.001</text>
<text class="t" x="1117" y="278.200">2 LL</text><text class="t e" x="1203" y="278.200">0.006</text><text class="t e" x="1250" y="278.200">-0.006</text>
<text class="t c" x="1100" y="288.800">171</text><text class="t" x="1117" y="288.800">1 DL</text><text class="t e" x="1203" y="288.800">0.000</text><text class="t e" x="1250" y="288.800">-0.001</text>
<text class="t" x="1117" y="299.500">2 LL</text><text class="t e" x="1203" y="299.500">0.000</text><text class="t e" x="1250" y="299.500">-0.005</text>
<text class="t c" x="1100" y="310.200">172</text><text class="t" x="1117" y="310.200">1 DL</text><text class="t e" x="1203" y="310.200">-0.000</text><text class="t e" x="1250" y="310.200">-0.000</text>
<text class="t" x="1117" y="320.800">2 LL</text><text class="t e" x="1203" y="320.800">-0.002</text><text class="t e" x="1250" y="320.800">-0.002</text>
<text class="t c" x="1100" y="331.500">173</text><text class="t" x="1117" y="331.500">1 DL</text><text class="t e" x="1203" y="331.500">-0.000</text><text class="t e" x="1250" y="331.500">-0.000</text>
<text class="t" x="1117" y="342.200">2 LL</text><text class="t e" x="1203" y="342.200">0.000</text><text class="t e" x="1250" y="342.200">-0.001</text>
<text class="t c" x="1100" y="352.800">174</text><text class="t" x="1117" y="352.800">1 DL</text><text class="t e" x="1203" y="352.800">-0.000</text><text class="t e" x="1250" y="352.800">-0.000</text>
<text class="t" x="1117" y="363.500">2 LL</text><text class="t e" x="1203" y="363.500">-0.002</text><text class="t e" x="1250" y="363.500">-0.004</text>
<text class="t c" x="1100" y="374.200">175</text><text class="t" x="1117" y="374.200">1 DL</text><text class="t e" x="1203" y="374.200">-0.002</text><text class="t e" x="1250" y="374.200">-0.001</text>
<text class="t" x="1117" y="384.800">2 LL</text><text class="t e" x="1203" y="384.800">-0.022</text><text class="t e" x="1250" y="384.800">-0.011</text>
</g>
<!-- scrollbars 1 -->
<rect x="1258" y="165" width="15" height="223" fill="#f4f4f4"/><rect x="1261" y="176" width="10" height="11" fill="#cdcdcd"/>
<path d="M1263 171L1266 168L1269 171M1263 381L1266 384L1269 381" fill="none" stroke="#444"/>
<rect x="1085" y="388" width="188" height="12" fill="#f4f4f4"/><rect x="1096" y="388" width="38" height="11" fill="#cdcdcd"/>
<path d="M1091 391L1088 394L1091 397M1255 391L1258 394L1255 397" fill="none" stroke="#444"/>
<!-- window 2 title -->
<rect x="1080" y="407" width="197" height="18" fill="#e4eff8"/>
<path d="M1086 414H1096V422H1086Z" fill="#fffbe0" stroke="#3a7a40"/><path d="M1086 414H1096V417H1086Z" fill="#2a8a50"/><path d="M1090 417V422" stroke="#c0a020"/>
<text x="1099" y="421" style="font-size:8.200px;fill:#8d99a4">cwt - Plate Corner Stress:</text>
<g fill="#e8f1f8" stroke="#8298a8"><rect x="1207.500" y="413.500" width="15" height="9.500" rx="1.500"/><rect x="1229.500" y="413.500" width="17" height="9.500" rx="1.500"/><rect x="1252.500" y="413.500" width="19" height="9.500" rx="1.500"/></g>
<path d="M1212 419H1218" stroke="#566" stroke-width="1.200"/><path d="M1235 416H1241V420H1235Z" fill="none" stroke="#566" stroke-width=".8"/><path d="M1259 416L1265 421M1265 416L1259 421" stroke="#7a8a96" stroke-width="1"/>
<rect x="1085" y="425" width="188" height="13" fill="#fff"/>
<g fill="#dedede" stroke="#999" stroke-width=".6"><rect x="1086.500" y="426.500" width="10" height="10.500"/><rect x="1097.500" y="426.500" width="10" height="10.500"/><rect x="1108.500" y="426.500" width="10" height="10.500" fill="#eee"/><rect x="1119.500" y="426.500" width="10" height="10.500" fill="#eee"/></g>
<path d="M1089 429V435M1094 429L1091 432L1094 435Z M1105 429L1101 432L1105 435Z" fill="#999" stroke="#999" stroke-width=".6"/>
<path d="M1111.500 428.500L1116 432L1111.500 435.500Z M1122 428.500L1126 432L1122 435.500ZM1127.500 429V435" fill="#111" stroke="#111" stroke-width=".7"/>
<path d="M1131 427L1136 438" stroke="#555"/>
<text x="1139" y="435" style="font-size:10.200px;fill:#333" textLength="133">Shear, Membrane and Bending</text>
<!-- table 2 -->
<rect x="1085" y="439" width="188" height="223" fill="#f0f0f0"/>
<rect x="1207" y="470" width="46" height="192" fill="#fffef4"/>
<rect x="1085" y="470" width="122" height="192" fill="url(#rl2)"/>
<rect x="1207" y="470" width="46" height="192" fill="url(#rd2)"/>
<g fill="none" stroke="#666"><path d="M1085 439.500H1258M1085 449.500H1258M1085 469.500H1258M1207.500 439V662M1113.500 450V662M1160.500 450V662M1252.500 450V470"/></g>
<path d="M1252.500 470V662" stroke="#ccc" stroke-dasharray="3 3"/>
<text class="h" x="1254" y="447.500">Shea</text>
<text class="h" x="1100" y="463">Plate</text><text class="h" x="1137" y="463">L/C</text><text class="h" x="1184" y="463">Node</text>
<text class="h" x="1231" y="458">SQX (local)</text><text class="h" x="1231" y="467.500">N/mm2</text>
<g>
<text class="t c" x="1100" y="477.500">167</text><text class="t" x="1117" y="477.500">1 DL</text><text class="t e" x="1204" y="477.500">69</text><text class="t e" x="1250" y="477.500">-0.058</text>
<text class="t e" x="1204" y="488.200">114</text><text class="t e" x="1250" y="488.200">-0.058</text>
<text class="t e" x="1204" y="498.800">115</text><text class="t e" x="1250" y="498.800">-0.055</text>
<text class="t e" x="1204" y="509.500">109</text><text class="t e" x="1250" y="509.500">-0.055</text>
<text class="t" x="1117" y="520.200">2 LL</text><text class="t e" x="1204" y="520.200">69</text><text class="t e" x="1250" y="520.200">-0.307</text>
<text class="t e" x="1204" y="530.800">114</text><text class="t e" x="1250" y="530.800">-0.307</text>
<text class="t e" x="1204" y="541.500">115</text><text class="t e" x="1250" y="541.500">-0.294</text>
<text class="t e" x="1204" y="552.200">109</text><text class="t e" x="1250" y="552.200">-0.294</text>
<text class="t c" x="1100" y="562.800">168</text><text class="t" x="1117" y="562.800">1 DL</text><text class="t e" x="1204" y="562.800">114</text><text class="t e" x="1250" y="562.800">-0.014</text>
<text class="t e" x="1204" y="573.500">116</text><text class="t e" x="1250" y="573.500">-0.014</text>
<text class="t e" x="1204" y="584.200">117</text><text class="t e" x="1250" y="584.200">-0.015</text>
<text class="t e" x="1204" y="594.800">115</text><text class="t e" x="1250" y="594.800">-0.015</text>
<text class="t" x="1117" y="605.500">2 LL</text><text class="t e" x="1204" y="605.500">114</text><text class="t e" x="1250" y="605.500">-0.075</text>
<text class="t e" x="1204" y="616.200">116</text><text class="t e" x="1250" y="616.200">-0.075</text>
<text class="t e" x="1204" y="626.800">117</text><text class="t e" x="1250" y="626.800">-0.079</text>
<text class="t e" x="1204" y="637.500">115</text><text class="t e" x="1250" y="637.500">-0.079</text>
<text class="t c" x="1100" y="648.200">169</text><text class="t" x="1117" y="648.200">1 DL</text><text class="t e" x="1204" y="648.200">116</text><text class="t e" x="1250" y="648.200">-0.001</text>
<text class="t e" x="1204" y="658.800">118</text><text class="t e" x="1250" y="658.800">-0.001</text>
</g>
<rect x="1258" y="439" width="15" height="223" fill="#f4f4f4"/><rect x="1261" y="450" width="10" height="11" fill="#cdcdcd"/>
<path d="M1263 445L1266 442L1269 445M1263 655L1266 658L1269 655" fill="none" stroke="#444"/>
<rect x="1085" y="662" width="188" height="12" fill="#f4f4f4"/><rect x="1096" y="662" width="19" height="11" fill="#cdcdcd"/>
<path d="M1091 665L1088 668L1091 671M1255 665L1258 668L1255 671" fill="none" stroke="#444"/>
<!-- watermark -->
<text x="1066" y="643" style="font-size:13px;fill:#a8a8a8;fill-opacity:.75">Activate Windows</text>
<text x="1066" y="657" style="font-size:10px;fill:#a0a0a0;fill-opacity:.75" textLength="156">Go to Settings to activate Windows.</text>

<!-- status -->
<rect y="680" width="1280" height="14" fill="#f0f0f0"/>
<path d="M0 680.500H1280" stroke="#e0e0e0"/>
<text x="2" y="691" style="font-size:8.400px" textLength="190" lengthAdjust="spacingAndGlyphs">Click on plates to select (Ctrl+click to toggle selection)</text>
<text x="1054" y="691" style="font-size:8.400px">Post Mode</text>
<text x="1107" y="691" style="font-size:8.400px">Load 1 : DL</text>
<text x="1208" y="691" style="font-size:8.400px">Input Units:</text><text x="1254" y="691" style="font-size:8.400px">kN-m</text>

<!-- taskbar -->
<rect y="694" width="1280" height="26" fill="#1c2f3e"/>
<path d="M11 702L15 701.400V706.500H11ZM16 701.200L22 700.300V706.500H16ZM11 707.500H15V712.500L11 712ZM16 707.500H22V713.700L16 712.800Z" fill="#f4f8fa"/>
<rect x="32" y="694" width="229" height="26" fill="#f2f2f2"/>
<circle cx="47" cy="705" r="3.800" fill="none" stroke="#333" stroke-width="1"/><path d="M44 708L40.500 712" stroke="#333" stroke-width="1.200"/>
<text x="58" y="711" style="font-size:10.200px;fill:#333" textLength="86" lengthAdjust="spacingAndGlyphs">Type here to search</text>
<circle cx="277.500" cy="707" r="4.500" fill="none" stroke="#f4f4f4" stroke-width="1.400"/>
<path d="M304 702H311V706H304ZM304 708H311V712H304ZM313 702H315V712H313Z" fill="none" stroke="#e8e8e8" stroke-width="1"/>
<path d="M336 701H342L344 703H350V713H336Z" fill="#e8b83c"/><rect x="336" y="705" width="14" height="8" fill="#f4d060"/><rect x="340" y="709" width="6" height="4" fill="#2a7ab0"/>
<path d="M369 703H381V714H369Z" fill="#f0f0f0"/><path d="M372 703V700H378V703" fill="none" stroke="#3aa0d8"/><rect x="372" y="706" width="3" height="3" fill="#e04020"/><rect x="376" y="706" width="3" height="3" fill="#60b030"/><rect x="372" y="710" width="3" height="3" fill="#2080d0"/><rect x="376" y="710" width="3" height="3" fill="#f0b020"/>
<path d="M401 703H416V714H401Z" fill="#1a8ad8"/><path d="M401 703L408.500 709L416 703Z" fill="#8fd4f4"/>
<rect x="434" y="700" width="13" height="13" fill="#1a7a3e"/><rect x="441" y="702" width="8" height="11" fill="#d4e8d8"/><text x="435" y="710.500" style="font-size:8.500px;font-weight:bold;fill:#fff">X</text>
<rect x="458" y="694" width="32" height="26" fill="#4a5a68"/><rect x="458" y="718" width="32" height="2" fill="#78b8e0"/>
<path d="M470 701H478M474 701V712M470 712H478" stroke="#1020a0" stroke-width="2"/><path d="M470 698H478M470 714H478" stroke="#801838" stroke-width="1.200"/>
<rect x="499" y="698" width="15" height="18" rx="1" fill="#e05818"/><circle cx="506.500" cy="707" r="3" fill="#fbe4c8"/><rect x="492" y="718" width="28" height="2" fill="#78b8e0"/>
<text x="758" y="709.500" style="font-size:8.600px;fill:#d8dce0">Address</text>
<rect x="790" y="697" width="153" height="20" fill="#fff"/><path d="M923.500 697V717" stroke="#ddd"/>
<path d="M910 706L913 709L916 706" fill="none" stroke="#555"/><path d="M937 704A4 4 0 1 1 931 704M931 701.500V705H934" fill="none" stroke="#555"/>
<path d="M997 710Q996 704 1001 703Q1004 698 1008 702Q1013 703 1011 710Q1004 713 997 710Z" fill="#cfe6f8"/>
<text x="1017" y="711" class="w" style="font-size:10px">13°C</text><text x="1042" y="711" class="w" style="font-size:10px" textLength="30">Cloudy</text>
<path d="M1082 709L1086 705L1090 709" fill="none" stroke="#e8e8e8"/>
<path d="M1098 701H1106V711H1098ZM1100 704H1104V708H1100ZM1099 713H1105" fill="none" stroke="#e8e8e8" stroke-width=".9"/>
<path d="M1115 710Q1114 705 1119 705Q1121 702 1124 705Q1127 706 1126 710Z" fill="#cfd8de"/>
<rect x="1131" y="700" width="5" height="10" rx="2.500" fill="#f0f0f0"/><path d="M1129 712H1138" stroke="#f0f0f0" stroke-width="1.400"/>
<circle cx="1150" cy="707" r="5" fill="none" stroke="#eee"/><path d="M1145 707H1155M1150 702V712" stroke="#eee" stroke-width=".7"/>
<path d="M1161 705H1164L1167 702V712L1164 709H1161Z" fill="#e8e8e8"/><path d="M1169 704Q1171 707 1169 710" fill="none" stroke="#e8e8e8"/>
<text x="1178" y="710" class="w" style="font-size:8.500px">ENG</text>
<text x="1212" y="703.500" class="w" style="font-size:8.500px">22:09</text>
<text x="1203" y="716" class="w" style="font-size:8.500px">26-01-2022</text>
<path d="M1255 701H1266V710H1261L1258 713V710H1255Z" fill="none" stroke="#f0f0f0"/><path d="M1257 704H1264M1257 707H1264" stroke="#f0f0f0" stroke-width=".8"/>
<rect x="1276" y="694" width="1" height="26" fill="#3a4a58"/>
</svg>
</body></html>
